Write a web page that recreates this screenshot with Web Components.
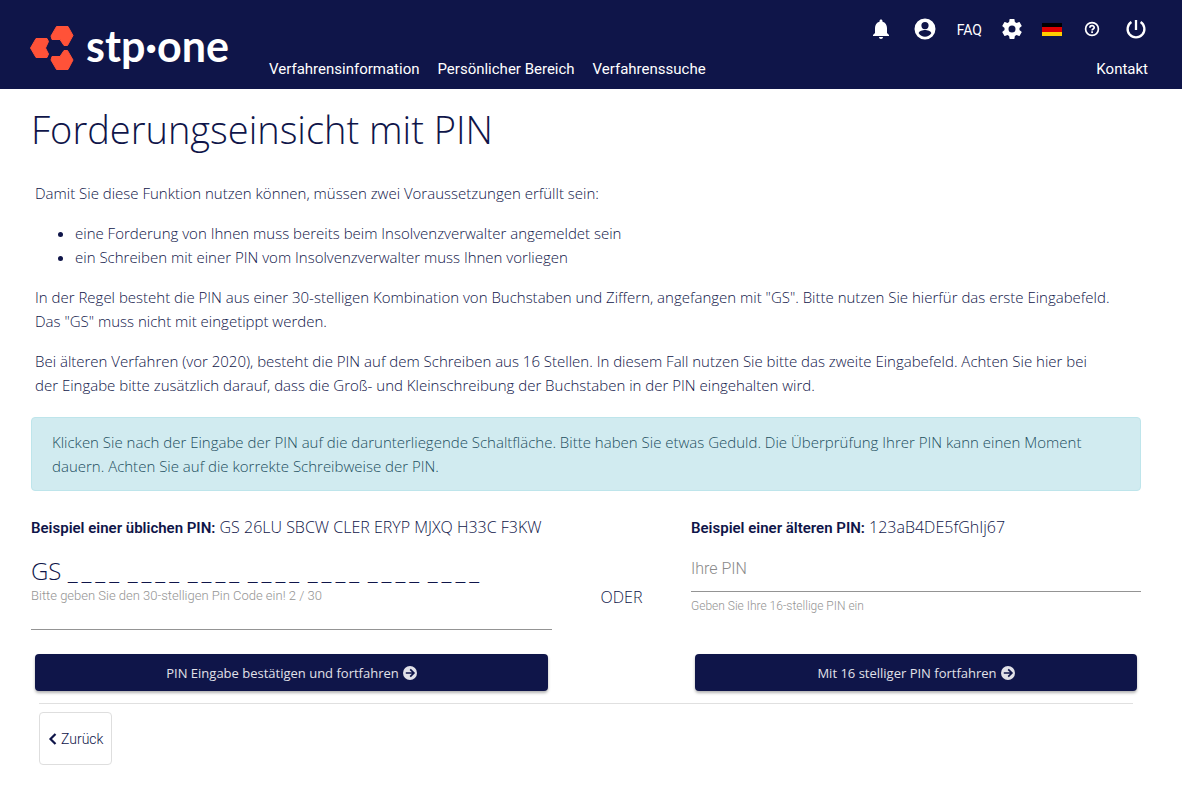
<!DOCTYPE html>
<html lang="de">
<head>
<meta charset="utf-8">
<meta name="viewport" content="width=device-width, initial-scale=1">
<title>Forderungseinsicht mit PIN</title>
<style>
  :root {
    --navy: #0f1549;
    --line: #949494;
    --text-font: "Open Sans", "Noto Sans", sans-serif;
    --ui-font: Roboto, "Noto Sans", sans-serif;
  }
  body {
    margin: 0;
    background: #fff;
    color: var(--navy);
    font: 300 15px/24px var(--text-font);
  }
</style>
</head>
<body>
<portal-page></portal-page>

<script>
function define(name, html) {
  const template = document.createElement('template');
  template.innerHTML = '<style>*{box-sizing:border-box}</style>' + html;
  customElements.define(name, class extends HTMLElement {
    constructor() {
      super();
      this.attachShadow({ mode: 'open' }).append(template.content.cloneNode(true));
    }
    connectedCallback() {
      for (const el of this.shadowRoot.querySelectorAll('[data-bind]')) {
        const [prop, attr] = el.dataset.bind.split(':');
        el[prop] = this.getAttribute(attr) || '';
      }
    }
  });
}

define('brand-logo', `
  <style>
    :host { display: block; }
    a { display: flex; align-items: flex-start; gap: 12px; color: #fff; text-decoration: none; font: 700 43px/40px Lato, sans-serif; }
    svg { display: block; }
  </style>
  <a href="#" aria-label="stp·one">
    <svg width="44" height="44" viewBox="0 0 44 44" fill="#ff5238" stroke="#ff5238" stroke-width="1" stroke-linejoin="round">
      <path d="M26.500 .5H38L43 9.500 37.500 19.500H34L30 13.500H22L21 10Z"/>
      <path d="M6 12.500H17L18.500 15.500 15.500 22 18.500 28 17 31.500H6L.5 22Z"/>
      <path d="M34 24.500H37.500L43 34 38 43.500H26.500L21 34 22 30.500H30Z"/>
    </svg>
    <span>stp·one</span>
  </a>`);

define('nav-link', `
  <style>
    :host { display: block; }
    a { color: #fff; text-decoration: none; font: 400 15px/24px var(--ui-font); }
    :host([small]) a { font-size: 14px; }
  </style>
  <a href="#"><slot></slot></a>`);

define('icon-button', `
  <style>
    :host { display: block; }
    button { display: block; margin: 0; padding: 0; border: 0; background: none; color: #fff; cursor: pointer; line-height: 0; }
  </style>
  <button type="button" data-bind="ariaLabel:label"><slot></slot></button>`);

define('site-header', `
  <style>
    :host { display: flex; gap: 40px; min-height: 89px; padding: 0 34px 0 30px; background: var(--navy); }
    brand-logo { margin-top: 26px; }
    .bars { flex: 1; display: flex; flex-direction: column; justify-content: space-between; padding: 16px 0 8px; }
    .tools { display: flex; justify-content: flex-end; align-items: center; height: 26px; gap: 20px; }
    .tools > :last-child { padding-left: 2px; }
    nav { display: flex; gap: 18px; }
    nav > :last-child { margin-left: auto; }
    svg { display: block; fill: currentColor; }
  </style>
  <brand-logo></brand-logo>
  <div class="bars">
    <div class="tools">
      <icon-button label="Benachrichtigungen"><svg width="24" height="24" viewBox="0 0 24 24"><path d="M12 22c1.100 0 2-.9 2-2h-4c0 1.100.9 2 2 2zm6-6v-5c0-3.070-1.630-5.640-4.500-6.320V4c0-.83-.67-1.500-1.500-1.500s-1.500.67-1.500 1.500v.68C7.640 5.360 6 7.920 6 11v5l-2 2v1h16v-1l-2-2z"/></svg></icon-button>
      <icon-button label="Konto"><svg width="24" height="24" viewBox="0 0 24 24"><path fill-rule="evenodd" d="M12 1.500a10.500 10.500 0 1 0 0 21 10.500 10.500 0 0 0 0-21zM12 5a3.600 3.600 0 1 1 0 7.200A3.600 3.600 0 0 1 12 5zm0 14.700c-2.600 0-4.900-1.300-6.300-3.400.1-2.100 4.200-3.200 6.300-3.200s6.200 1.100 6.300 3.200A7.600 7.600 0 0 1 12 19.700z"/></svg></icon-button>
      <nav-link small>FAQ</nav-link>
      <icon-button label="Einstellungen"><svg width="20" height="20" viewBox="2 2 20 20"><path d="M19.430 12.980c.04-.32.070-.64.070-.98s-.03-.66-.07-.98l2.110-1.650c.19-.15.240-.42.120-.64l-2-3.460c-.12-.22-.39-.3-.61-.22l-2.490 1c-.52-.4-1.080-.73-1.690-.98l-.38-2.650C14.460 2.180 14.250 2 14 2h-4c-.25 0-.46.180-.49.420l-.38 2.650c-.61.250-1.170.590-1.690.980l-2.490-1c-.23-.09-.49 0-.61.220l-2 3.460c-.13.220-.07.490.12.640l2.110 1.650c-.04.320-.07.650-.07.980s.03.660.070.980l-2.110 1.650c-.19.150-.24.420-.12.640l2 3.460c.12.220.390.300.610.220l2.490-1c.52.400 1.080.730 1.690.980l.38 2.650c.03.240.240.420.490.420h4c.25 0 .46-.18.490-.42l.38-2.650c.61-.25 1.170-.59 1.690-.98l2.490 1c.23.090.49 0 .61-.22l2-3.460c.12-.22.070-.49-.12-.64l-2.110-1.650zM12 15.500a3.500 3.500 0 1 1 0-7 3.500 3.500 0 0 1 0 7z"/></svg></icon-button>
      <icon-button label="Sprache: Deutsch"><svg width="20" height="13" viewBox="0 0 20 13"><path fill="#000" d="M0 0h20v4H0z"/><path fill="#d00" d="M0 4h20v5H0z"/><path fill="#ffce00" d="M0 9h20v4H0z"/></svg></icon-button>
      <icon-button label="Hilfe"><svg width="20" height="20" viewBox="0 0 20 20" style="fill:none" stroke="currentColor"><circle cx="10" cy="10" r="6.400" stroke-width="1.700"/><path d="M7.900 8.800c0-2.900 4.300-2.900 4.300-.3 0 1.500-2.100 1.400-2.100 2.900M10.100 12.200v1.800" stroke-width="1.700"/></svg></icon-button>
      <icon-button label="Abmelden"><svg width="24" height="24" viewBox="0 0 24 24" style="fill:none" stroke="currentColor" stroke-width="2.300"><path d="M12 3v10M7.400 5A8.400 8.400 0 1 0 16.600 5"/></svg></icon-button>
    </div>
    <nav>
      <nav-link>Verfahrensinformation</nav-link>
      <nav-link>Persönlicher Bereich</nav-link>
      <nav-link>Verfahrenssuche</nav-link>
      <nav-link>Kontakt</nav-link>
    </nav>
  </div>`);

define('info-alert', `
  <style>
    :host { display: block; padding: 12px 20px; border: 1px solid #bee5eb; border-radius: 4px; background: #d1ebf0; color: #1d4f60; }
  </style>
  <slot></slot>`);

define('submit-button', `
  <style>
    :host { display: block; padding: 0 4px; }
    button { display: flex; align-items: center; justify-content: center; gap: 4px; width: 100%; height: 37px; margin: 0; padding: 0 16px; border: 0; border-radius: 4px; background: var(--navy); color: #e1e1e8; font: 400 13px/24px var(--text-font); box-shadow: 0 2px 3px rgba(0,0,0,.3); cursor: pointer; }
  </style>
  <button type="submit"><slot></slot>
    <svg width="14" height="14" viewBox="0 0 14 14"><circle cx="7" cy="7" r="7" fill="#e1e1e8"/><path d="M2.800 7h7.800M7.200 3.300 10.900 7l-3.700 3.700" fill="none" stroke="#0f1549" stroke-width="1.700"/></svg>
  </button>`);

define('masked-pin', `
  <style>
    :host { display: block; height: 75px; border-bottom: 1px solid var(--line); }
    input { display: block; width: 100%; height: 32px; margin: 0; padding: 0; border: 0; outline: 0; background: none; color: var(--navy); font: 300 24px/32px var(--text-font); }
    label { display: block; color: #949494; font: 300 13px/18px var(--ui-font); }
  </style>
  <input id="pin" type="text" value="GS _&#8201;_&#8201;_&#8201;_ &#8202;_&#8201;_&#8201;_&#8201;_ &#8202;_&#8201;_&#8201;_&#8201;_ &#8202;_&#8201;_&#8201;_&#8201;_ &#8202;_&#8201;_&#8201;_&#8201;_ &#8202;_&#8201;_&#8201;_&#8201;_ &#8202;_&#8201;_&#8201;_&#8201;_">
  <label for="pin">Bitte geben Sie den 30-stelligen Pin Code ein! 2 / 30</label>`);

define('plain-pin', `
  <style>
    :host { display: block; }
    input { display: block; width: 100%; height: 37px; margin: 0; padding: 0 0 10px; border: 0; border-bottom: 1px solid var(--line); outline: 0; background: none; color: var(--navy); font: 300 16px/24px var(--ui-font); }
    input::placeholder { color: #8a8a8a; opacity: 1; }
    label { display: block; padding-top: 5px; color: #949494; font: 300 12px/18px var(--ui-font); }
  </style>
  <input id="pin" type="text" placeholder="Ihre PIN">
  <label for="pin">Geben Sie Ihre 16-stellige PIN ein</label>`);

define('pin-forms', `
  <style>
    :host { display: grid; grid-template-columns: 521fr 139fr 450fr; font-size: 16px; }
    form { display: flex; flex-direction: column; min-width: 0; }
    p { margin: 0 0 16px; white-space: nowrap; }
    b { font: 600 15px/20px var(--ui-font); }
    submit-button { margin-top: auto; padding-top: 24px; }
    .or { display: flex; justify-content: center; padding-top: 70px; }
  </style>
  <form>
    <p><b>Beispiel einer üblichen PIN:</b> GS 26LU SBCW CLER ERYP MJXQ H33C F3KW</p>
    <masked-pin></masked-pin>
    <submit-button>PIN Eingabe bestätigen und fortfahren</submit-button>
  </form>
  <div class="or">ODER</div>
  <form>
    <p><b>Beispiel einer älteren PIN:</b> 123aB4DE5fGhIj67</p>
    <plain-pin></plain-pin>
    <submit-button>Mit 16 stelliger PIN fortfahren</submit-button>
  </form>`);

define('back-button', `
  <style>
    :host { display: block; margin: 12px 8px 0; padding-top: 8px; border-top: 1px solid #e0e0e0; }
    button { display: flex; align-items: center; gap: 4px; height: 53px; margin: 0; padding: 0 8px; border: 1px solid #dedede; border-radius: 4px; background: #fff; color: var(--navy); font: 300 14px/24px var(--ui-font); cursor: pointer; }
  </style>
  <button type="button"><svg width="9" height="12" viewBox="0 0 9 12"><path d="M7.500 1 2.500 6l5 5" fill="none" stroke="currentColor" stroke-width="2.200"/></svg><slot></slot></button>`);

define('portal-page', `
  <style>
    :host { display: block; }
    main { padding: 16px 41px 22px 31px; }
    h1 { margin: 0 0 28px; font-size: 38px; line-height: 48px; font-weight: 300; }
    .intro { padding: 0 4px; }
    .intro p, ul { margin: 0 0 16px; }
    ul { padding-left: 40px; }
    info-alert { margin: 20px 0 24px; }
  </style>
  <site-header></site-header>
  <main>
    <h1>Forderungseinsicht mit PIN</h1>
    <div class="intro">
      <p>Damit Sie diese Funktion nutzen können, müssen zwei Voraussetzungen erfüllt sein:</p>
      <ul>
        <li>eine Forderung von Ihnen muss bereits beim Insolvenzverwalter angemeldet sein</li>
        <li>ein Schreiben mit einer PIN vom Insolvenzverwalter muss Ihnen vorliegen</li>
      </ul>
      <p>In der Regel besteht die PIN aus einer 30-stelligen Kombination von Buchstaben und Ziffern, angefangen mit "GS". Bitte nutzen Sie hierfür das erste Eingabefeld.<br>Das "GS" muss nicht mit eingetippt werden.</p>
      <p>Bei älteren Verfahren (vor 2020), besteht die PIN auf dem Schreiben aus 16 Stellen. In diesem Fall nutzen Sie bitte das zweite Eingabefeld. Achten Sie hier bei<br>der Eingabe bitte zusätzlich darauf, dass die Groß- und Kleinschreibung der Buchstaben in der PIN eingehalten wird.</p>
    </div>
    <info-alert>Klicken Sie nach der Eingabe der PIN auf die darunterliegende Schaltfläche. Bitte haben Sie etwas Geduld. Die Überprüfung Ihrer PIN kann einen Moment<br>dauern. Achten Sie auf die korrekte Schreibweise der PIN.</info-alert>
    <pin-forms></pin-forms>
    <back-button>Zurück</back-button>
  </main>`);
</script>
</body>
</html>
